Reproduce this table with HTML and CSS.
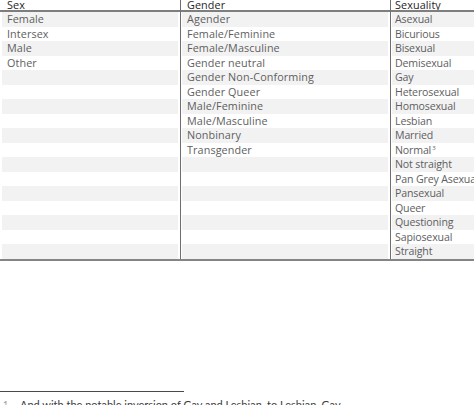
FILE: index.html
```html
<!DOCTYPE html>
<html>
<head>
<meta charset="utf-8">
<link rel="stylesheet" href="styles.css">
</head>
<body>
<div class="page">
  <div class="tbl">
    <div class="c h"><div class="in">Sex</div></div>
    <div class="c h"><div class="in">Gender</div></div>
    <div class="c h"><div class="in">Sexuality</div></div>

    <div class="c s"><div class="in">Female</div></div>
    <div class="c s"><div class="in">Agender</div></div>
    <div class="c s"><div class="in">Asexual</div></div>

    <div class="c"><div class="in">Intersex</div></div>
    <div class="c"><div class="in">Female/Feminine</div></div>
    <div class="c"><div class="in">Bicurious</div></div>

    <div class="c s"><div class="in">Male</div></div>
    <div class="c s"><div class="in">Female/Masculine</div></div>
    <div class="c s"><div class="in">Bisexual</div></div>

    <div class="c"><div class="in">Other</div></div>
    <div class="c"><div class="in">Gender neutral</div></div>
    <div class="c"><div class="in">Demisexual</div></div>

    <div class="c s"><div class="in"></div></div>
    <div class="c s"><div class="in">Gender Non-Conforming</div></div>
    <div class="c s"><div class="in">Gay</div></div>

    <div class="c"><div class="in"></div></div>
    <div class="c"><div class="in">Gender Queer</div></div>
    <div class="c"><div class="in">Heterosexual</div></div>

    <div class="c s"><div class="in"></div></div>
    <div class="c s"><div class="in">Male/Feminine</div></div>
    <div class="c s"><div class="in">Homosexual</div></div>

    <div class="c"><div class="in"></div></div>
    <div class="c"><div class="in">Male/Masculine</div></div>
    <div class="c"><div class="in">Lesbian</div></div>

    <div class="c s"><div class="in"></div></div>
    <div class="c s"><div class="in">Nonbinary</div></div>
    <div class="c s"><div class="in">Married</div></div>

    <div class="c"><div class="in"></div></div>
    <div class="c"><div class="in">Transgender</div></div>
    <div class="c"><div class="in">Normal<sup class="fn">3</sup></div></div>

    <div class="c s"><div class="in"></div></div>
    <div class="c s"><div class="in"></div></div>
    <div class="c s"><div class="in">Not straight</div></div>

    <div class="c"><div class="in"></div></div>
    <div class="c"><div class="in"></div></div>
    <div class="c"><div class="in">Pan Grey Asexual</div></div>

    <div class="c s"><div class="in"></div></div>
    <div class="c s"><div class="in"></div></div>
    <div class="c s"><div class="in">Pansexual</div></div>

    <div class="c"><div class="in"></div></div>
    <div class="c"><div class="in"></div></div>
    <div class="c"><div class="in">Queer</div></div>

    <div class="c s"><div class="in"></div></div>
    <div class="c s"><div class="in"></div></div>
    <div class="c s"><div class="in">Questioning</div></div>

    <div class="c"><div class="in"></div></div>
    <div class="c"><div class="in"></div></div>
    <div class="c"><div class="in">Sapiosexual</div></div>

    <div class="c s"><div class="in"></div></div>
    <div class="c s"><div class="in"></div></div>
    <div class="c s"><div class="in">Straight</div></div>
  </div>

  <div class="notes">
    <div class="rule"></div>
    <div class="note"><span class="num">1</span><span class="txt">And with the notable inversion of Gay and Lesbian, to Lesbian, Gay,</span></div>
  </div>
</div>
</body>
</html>
```

FILE: styles.css
```css
html, body {
  margin: 0;
  padding: 0;
  background: #ffffff;
}
body {
  width: 474px;
  height: 405px;
  overflow: hidden;
  font-family: "Open Sans", Lato, "Liberation Sans", sans-serif;
}
.tbl {
  display: grid;
  grid-template-columns: 180px 210px 1fr;
  grid-template-rows: 12px;
  grid-auto-rows: 14.5px;
  border-bottom: 2px solid #858585;
  white-space: nowrap;
  overflow: hidden;
}
.c {
  padding: 0 2px 0 1px;
  font-size: 10.8px;
  letter-spacing: 0.1px;
  line-height: 14.5px;
  color: #5e5e5e;
  overflow: hidden;
}
.c:nth-child(3n+1) {
  padding-left: 2px;
}
.c:nth-child(3n+2),
.c:nth-child(3n) {
  border-left: 1px solid #6e6e6e;
}
.c:nth-child(3n) {
  padding-right: 0;
  font-size: 10.6px;
  letter-spacing: -0.15px;
}
.in {
  height: 100%;
  padding-left: 5px;
}
.c:nth-child(3n) .in {
  padding-left: 3px;
}
.c.s .in {
  background: #f2f2f2;
}
.c.h {
  height: 10px;
  line-height: 10px;
  font-size: 10.8px;
  letter-spacing: 0.1px;
  color: #1e1e1e;
  border-bottom: 2px solid #7e7e7e;
  padding-right: 0;
}
.fn {
  font-size: 6px;
  vertical-align: 4px;
  line-height: 0;
  margin-left: 1px;
}
.notes {
  margin-top: 130px;
}
.rule {
  width: 184px;
  height: 1px;
  background: #4a4a4a;
}
.note {
  display: flex;
  margin-top: 6px;
  font-family: Lato, "Open Sans", sans-serif;
  font-size: 11px;
  line-height: 14px;
  color: #3c3c3c;
  white-space: nowrap;
}
.num {
  width: 20px;
  padding-left: 3px;
  box-sizing: border-box;
  color: #9a9a9a;
  font-size: 9px;
}
```
